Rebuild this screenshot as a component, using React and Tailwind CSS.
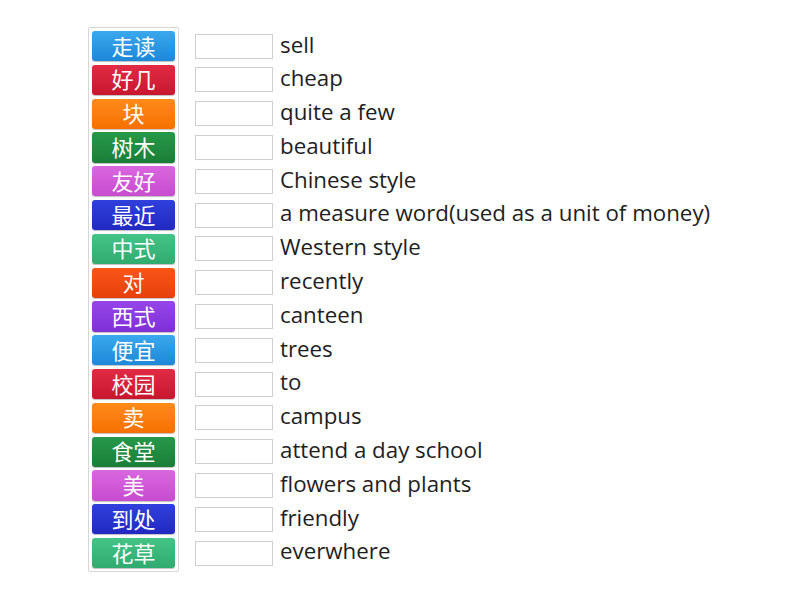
const rows = [
  ["走读", "sell", "from-[#3aa8ee] to-[#1c88d8]"],
  ["好几", "cheap", "from-[#e22a44] to-[#c8162e]"],
  ["块", "quite a few", "from-[#ff8a1a] to-[#f57000]"],
  ["树木", "beautiful", "from-[#26994a] to-[#1a7e38]"],
  ["友好", "Chinese style", "from-[#da66e0] to-[#c74ccf]"],
  ["最近", "a measure word(used as a unit of money)", "from-[#3040dc] to-[#2228c2]"],
  ["中式", "Western style", "from-[#44c486] to-[#30ab70]"],
  ["对", "recently", "from-[#fa5518] to-[#e6400a]"],
  ["西式", "canteen", "from-[#9646e8] to-[#7f2fd6]"],
  ["便宜", "trees", "from-[#3aa8ee] to-[#1c88d8]"],
  ["校园", "to", "from-[#e22a44] to-[#c8162e]"],
  ["卖", "campus", "from-[#ff8a1a] to-[#f57000]"],
  ["食堂", "attend a day school", "from-[#26994a] to-[#1a7e38]"],
  ["美", "flowers and plants", "from-[#da66e0] to-[#c74ccf]"],
  ["到处", "friendly", "from-[#3040dc] to-[#2228c2]"],
  ["花草", "everwhere", "from-[#44c486] to-[#30ab70]"],
];

export default function App() {
  return (
    <div className="w-[800px] h-[600px] bg-white font-['Open_Sans','Noto_Sans_CJK_SC',sans-serif]">
      <div className="flex pt-[27px] pl-[88px]">
        {/* tiles */}
        <div className="border border-[#d6d6d6] rounded-[2px] p-[3px] flex flex-col gap-[3.5px]">
          {rows.map(([zh, , grad], i) => (
            <div
              key={i}
              className={`w-[83px] h-[30.3px] pb-[3px] rounded-[3px] bg-gradient-to-b ${grad} shadow-[0_1px_1px_rgba(0,0,0,0.25)] flex items-center justify-center text-white text-[22px] leading-none font-['Noto_Sans_CJK_SC',sans-serif]`}
            >
              {zh}
            </div>
          ))}
        </div>
        {/* answers */}
        <div className="ml-[16px] pt-[4px] flex flex-col gap-[3.5px]">
          {rows.map(([, en], i) => (
            <div key={i} className="h-[30.3px] flex items-center">
              <div className="w-[78px] h-[25px] border border-[#cfcfcf] bg-white"></div>
              <span className="ml-[7px] -mt-[3px] text-[22.3px] leading-none text-[#1e1e1e] whitespace-nowrap">{en}</span>
            </div>
          ))}
        </div>
      </div>
    </div>
  );
}
